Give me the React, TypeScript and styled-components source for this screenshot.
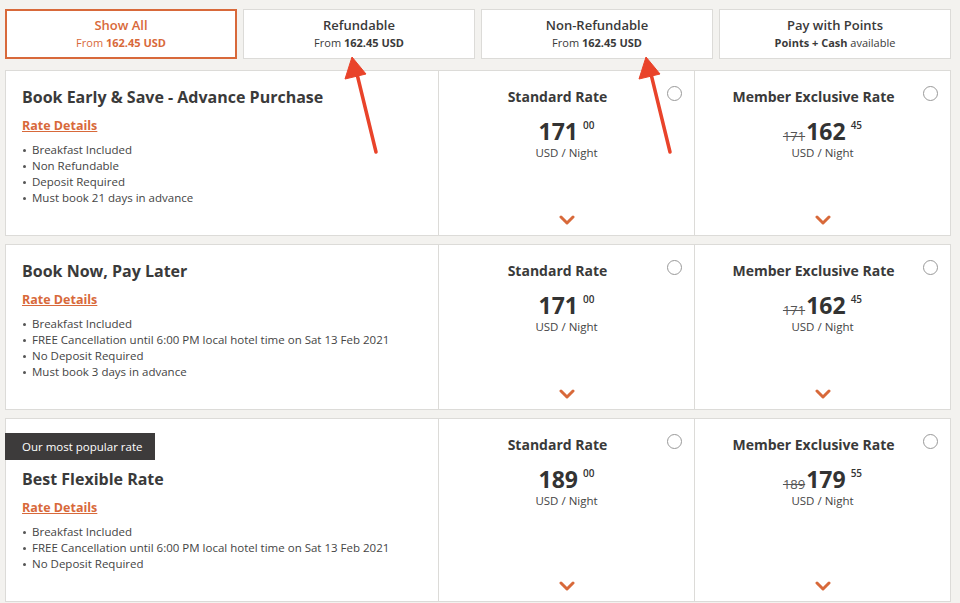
import React from "react";
import styled, { createGlobalStyle } from "styled-components";

const Global = createGlobalStyle`
  html, body { margin: 0; padding: 0; background: #f3f2ef; }
  body { font-family: "Open Sans", "Lato", "Liberation Sans", sans-serif; color: #3a3a3a; }
  * { box-sizing: border-box; }
`;

const ORANGE = "#d8693a";

const Page = styled.div`
  position: relative;
  width: 960px;
  height: 603px;
  overflow: hidden;
  padding: 9px 9px 0 5px;
`;

const Tabs = styled.div`
  display: grid;
  grid-template-columns: repeat(4, 1fr);
  gap: 6px;
  height: 50px;
`;

const Tab = styled.div<{ $active?: boolean }>`
  background: #fff;
  border: ${(p) => (p.$active ? `2px solid ${ORANGE}` : "1px solid #dcdbd8")};
  display: flex;
  flex-direction: column;
  align-items: center;
  justify-content: center;
  gap: 1px;
  padding-bottom: 1px;
  color: ${(p) => (p.$active ? ORANGE : "#3a3a3a")};
`;

const TabTitle = styled.div`
  font-size: 13px;
  font-weight: 600;
  line-height: 17px;
`;

const TabSub = styled.div`
  font-size: 11px;
  line-height: 15px;
  b { font-weight: 700; }
`;

const Cards = styled.div`
  margin-top: 11px;
  display: flex;
  flex-direction: column;
  gap: 8px;
`;

const Card = styled.div<{ $h: number }>`
  display: grid;
  grid-template-columns: 432px 256px 1fr;
  height: ${(p) => p.$h}px;
  background: #fff;
  border: 1px solid #dcdbd8;
`;

const Info = styled.div`
  padding: 15px 16px 0 16px;
  display: flex;
  flex-direction: column;
`;

const Badge = styled.div`
  align-self: flex-start;
  margin: -1px 0 8px -17px;
  background: #3d3b3b;
  color: #fff;
  font-size: 11.5px;
  height: 27px;
  width: 150px;
  display: flex;
  align-items: center;
  padding-left: 17px;
`;

const RateName = styled.div`
  font-size: 16px;
  font-weight: 700;
  line-height: 22px;
  color: #3a3a3a;
`;

const Details = styled.a`
  margin-top: 10px;
  font-size: 12.5px;
  font-weight: 700;
  color: ${ORANGE};
  text-decoration: underline;
  line-height: 16px;
`;

const Bullets = styled.ul`
  margin: 8px 0 0 0;
  padding: 0 0 0 10px;
  list-style: none;
`;

const Bullet = styled.li`
  font-size: 11.5px;
  line-height: 16px;
  color: #444;
  position: relative;
  &::before {
    content: "";
    position: absolute;
    left: -9px;
    top: 7px;
    width: 3px;
    height: 3px;
    border-radius: 50%;
    background: #555;
  }
`;

const PricePanel = styled.div`
  position: relative;
  border-left: 1px solid #dcdbd8;
  display: flex;
  flex-direction: column;
  align-items: center;
  padding: 16px 0 10px 0;
`;

const Radio = styled.span`
  position: absolute;
  top: 15px;
  right: 12px;
  width: 15px;
  height: 15px;
  border-radius: 50%;
  border: 1px solid #999;
  background: #fff;
`;

const PanelTitle = styled.div`
  font-size: 14px;
  font-weight: 700;
  line-height: 20px;
  color: #3a3a3a;
  padding-right: 18px;
`;

const PriceRow = styled.div`
  margin-top: 10px;
  display: flex;
  align-items: flex-start;
  line-height: 28px;
  height: 28px;
`;

const Strike = styled.span`
  font-size: 13px;
  color: #555;
  text-decoration: line-through;
  margin-top: 5px;
  margin-right: 1px;
`;

const Whole = styled.span`
  font-size: 23px;
  font-weight: 700;
  color: #333;
`;

const Cents = styled.span`
  font-size: 10px;
  font-weight: 600;
  line-height: 12px;
  margin-left: 5px;
  margin-top: 2px;
  color: #333;
`;

const PerNight = styled.div`
  font-size: 11.5px;
  color: #444;
  line-height: 16px;
`;

const Chevron = styled.div`
  margin-top: auto;
  color: ${ORANGE};
  display: flex;
`;

const Arrows = styled.svg`
  position: absolute;
  left: 0;
  top: 0;
  pointer-events: none;
`;

type Rate = {
  name: string;
  badge?: string;
  bullets: string[];
  std: [string, string];
  mem: [string, string, string];
  h: number;
};

const rates: Rate[] = [
  {
    name: "Book Early & Save - Advance Purchase",
    bullets: ["Breakfast Included", "Non Refundable", "Deposit Required", "Must book 21 days in advance"],
    std: ["171", "00"],
    mem: ["171", "162", "45"],
    h: 166,
  },
  {
    name: "Book Now, Pay Later",
    bullets: [
      "Breakfast Included",
      "FREE Cancellation until 6:00 PM local hotel time on Sat 13 Feb 2021",
      "No Deposit Required",
      "Must book 3 days in advance",
    ],
    std: ["171", "00"],
    mem: ["171", "162", "45"],
    h: 166,
  },
  {
    name: "Best Flexible Rate",
    badge: "Our most popular rate",
    bullets: [
      "Breakfast Included",
      "FREE Cancellation until 6:00 PM local hotel time on Sat 13 Feb 2021",
      "No Deposit Required",
    ],
    std: ["189", "00"],
    mem: ["189", "179", "55"],
    h: 184,
  },
];

const ChevronIcon = () => (
  <svg width="16" height="10" viewBox="0 0 16 10">
    <path d="M2 2 L8 8 L14 2" fill="none" stroke="currentColor" strokeWidth="3" strokeLinecap="round" strokeLinejoin="round" />
  </svg>
);

export default function App() {
  return (
    <Page>
      <Global />
      <Tabs>
        <Tab $active>
          <TabTitle>Show All</TabTitle>
          <TabSub>
            From <b>162.45 USD</b>
          </TabSub>
        </Tab>
        <Tab>
          <TabTitle>Refundable</TabTitle>
          <TabSub>
            From <b>162.45 USD</b>
          </TabSub>
        </Tab>
        <Tab>
          <TabTitle>Non-Refundable</TabTitle>
          <TabSub>
            From <b>162.45 USD</b>
          </TabSub>
        </Tab>
        <Tab>
          <TabTitle>Pay with Points</TabTitle>
          <TabSub>
            <b>Points + Cash</b> available
          </TabSub>
        </Tab>
      </Tabs>
      <Cards>
        {rates.map((r) => (
          <Card key={r.name} $h={r.h}>
            <Info>
              {r.badge && <Badge>{r.badge}</Badge>}
              <RateName>{r.name}</RateName>
              <Details>Rate Details</Details>
              <Bullets>
                {r.bullets.map((b) => (
                  <Bullet key={b}>{b}</Bullet>
                ))}
              </Bullets>
            </Info>
            <PricePanel>
              <Radio />
              <PanelTitle>Standard Rate</PanelTitle>
              <PriceRow>
                <Whole>{r.std[0]}</Whole>
                <Cents>{r.std[1]}</Cents>
              </PriceRow>
              <PerNight>USD / Night</PerNight>
              <Chevron>
                <ChevronIcon />
              </Chevron>
            </PricePanel>
            <PricePanel>
              <Radio />
              <PanelTitle>Member Exclusive Rate</PanelTitle>
              <PriceRow>
                <Strike>{r.mem[0]}</Strike>
                <Whole>{r.mem[1]}</Whole>
                <Cents>{r.mem[2]}</Cents>
              </PriceRow>
              <PerNight>USD / Night</PerNight>
              <Chevron>
                <ChevronIcon />
              </Chevron>
            </PricePanel>
          </Card>
        ))}
      </Cards>
      <Arrows width="960" height="603" viewBox="0 0 960 603">
        <g fill="#e9432a" stroke="#e9432a">
          <line x1="376" y1="152" x2="357" y2="74" strokeWidth="3.5" strokeLinecap="round" />
          <polygon points="352,57 345,79 366,74" strokeWidth="1" />
          <line x1="670" y1="152" x2="651" y2="74" strokeWidth="3.5" strokeLinecap="round" />
          <polygon points="646,57 639,79 660,74" strokeWidth="1" />
        </g>
      </Arrows>
    </Page>
  );
}
